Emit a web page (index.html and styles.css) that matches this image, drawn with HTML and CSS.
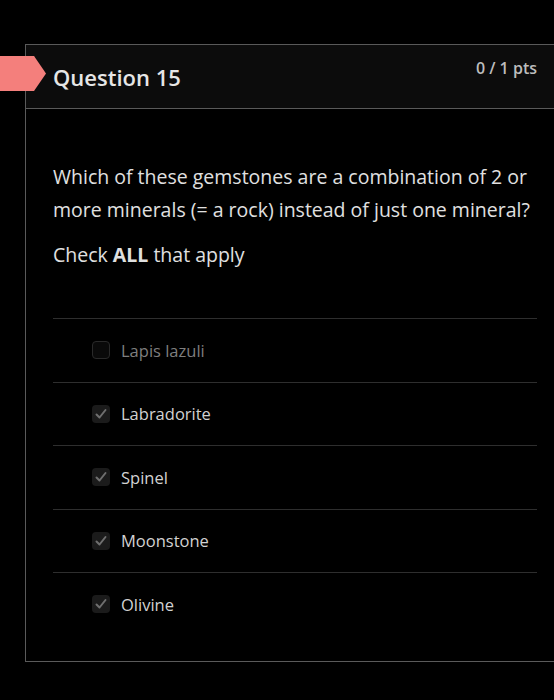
FILE: index.html
```html
<!DOCTYPE html>
<html lang="en">
<head>
    <meta charset="UTF-8">
    <title>Question 15</title>
    <link rel="stylesheet" href="styles.css">
</head>
<body>
    <div class="flag"></div>
    <div class="card">
        <div class="card-header">
            <h2 class="title">Question 15</h2>
            <div class="points">0 / 1 pts</div>
        </div>
        <div class="card-body">
            <p class="question">Which of these gemstones are a combination of 2 or more minerals (= a rock) instead of just one mineral?</p>
            <p class="hint">Check <b>ALL</b> that apply</p>
            <ul class="answers">
                <li class="answer unchecked"><span class="box"></span>Lapis lazuli</li>
                <li class="answer"><span class="box"><svg viewBox="0 0 18 18"><path d="M4.5 9.5l3 3 6-7.5"/></svg></span>Labradorite</li>
                <li class="answer"><span class="box"><svg viewBox="0 0 18 18"><path d="M4.5 9.5l3 3 6-7.5"/></svg></span>Spinel</li>
                <li class="answer"><span class="box"><svg viewBox="0 0 18 18"><path d="M4.5 9.5l3 3 6-7.5"/></svg></span>Moonstone</li>
                <li class="answer"><span class="box"><svg viewBox="0 0 18 18"><path d="M4.5 9.5l3 3 6-7.5"/></svg></span>Olivine</li>
            </ul>
        </div>
    </div>
</body>
</html>
```

FILE: styles.css
```css
body {
    margin: 0;
    padding: 44px 0 0 25px;
    background-color: #000;
    font-family: "Open Sans", sans-serif;
    color: #ddd;
    overflow: hidden;
    position: relative;
}

.flag {
    position: absolute;
    left: 0;
    top: 56px;
    width: 46px;
    height: 35px;
    background-color: #f47f7c;
    clip-path: polygon(0 0, 74% 0, 100% 50%, 74% 100%, 0 100%);
}

.card {
    width: 528px;
    height: 616px;
    border: 1px solid #5a5a5a;
    border-right: none;
}

.card-header {
    display: flex;
    justify-content: space-between;
    height: 63px;
    background-color: #0c0c0c;
    border-bottom: 1px solid #5a5a5a;
}

.title {
    margin: 17px 0 0 27px;
    font-size: 22px;
    font-weight: 600;
    color: #e6e6e6;
}

.points {
    margin: 12px 17px 0 0;
    font-size: 16px;
    font-weight: 600;
    color: #bdbdbd;
}

.card-body {
    padding: 51px 17px 0 27px;
}

.question {
    margin: 0;
    font-size: 19.5px;
    line-height: 33px;
    color: #e0e0e0;
}

.hint {
    margin: 12px 0 0;
    font-size: 19.5px;
    line-height: 33px;
    color: #e0e0e0;
}

.answers {
    list-style: none;
    margin: 47px 0 0;
    padding: 0;
}

.answer {
    box-sizing: border-box;
    display: flex;
    align-items: center;
    height: 63.5px;
    border-top: 1px solid #2e2e2e;
    padding-left: 39px;
    font-size: 16.5px;
    color: #d2d2d2;
}

.answer.unchecked {
    color: #7e7e7e;
}

.box {
    width: 18px;
    height: 18px;
    margin-right: 11px;
    border-radius: 4px;
    background-color: #1b1b1b;
}

.unchecked .box {
    background-color: #0a0a0a;
    border: 1px solid #2a2a2a;
    width: 16px;
    height: 16px;
}

.box svg {
    width: 18px;
    height: 18px;
    fill: none;
    stroke: #6f6f6f;
    stroke-width: 2;
    stroke-linecap: round;
    stroke-linejoin: round;
}
```
